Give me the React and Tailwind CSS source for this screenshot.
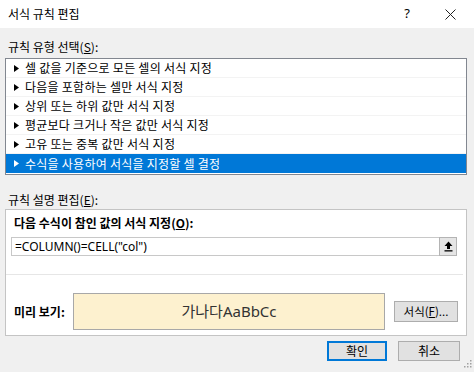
const rules = [
  "셀 값을 기준으로 모든 셀의 서식 지정",
  "다음을 포함하는 셀만 서식 지정",
  "상위 또는 하위 값만 서식 지정",
  "평균보다 크거나 작은 값만 서식 지정",
  "고유 또는 중복 값만 서식 지정",
  "수식을 사용하여 서식을 지정할 셀 결정",
];

const kr = { fontFamily: '"Noto Sans CJK KR", "Noto Sans", sans-serif' };
const latin = { fontFamily: '"Noto Sans", "Noto Sans CJK KR", sans-serif' };

function Tri({ color }) {
  return (
    <svg width="5" height="7" viewBox="0 0 5 7" className="shrink-0">
      <path d="M0 0 L5 3.5 L0 7 Z" fill={color} />
    </svg>
  );
}

export default function App() {
  return (
    <div className="relative w-[474px] h-[372px] bg-[#f0f0f0] text-[#000] overflow-hidden" style={kr}>
      {/* title bar */}
      <div className="h-[28px] bg-white flex items-center pl-[8px] text-[12px]">
        <span>서식 규칙 편집</span>
        <span className="ml-auto mr-[35px] text-[13px]" style={latin}>?</span>
        <svg width="11" height="11" viewBox="0 0 11 11" className="mr-[18px]">
          <path d="M0.5 0.5 L10.5 10.5 M10.5 0.5 L0.5 10.5" stroke="#222" strokeWidth="1" />
        </svg>
      </div>

      <div className="pl-[5px] w-[467px]">
        <div className="pt-[11px] pb-[3px] pl-[3px] leading-[16px] text-[12px]">
          규칙 유형 선택(<span className="underline">S</span>):
        </div>

        <div className="h-[117px] bg-white border border-[#828790] flex flex-col">
          {rules.map((r, i) => {
            const sel = i === rules.length - 1;
            return (
              <div
                key={r}
                className={
                  sel
                    ? "h-[19px] flex items-center gap-[6px] pl-[8px] bg-[#0078d7] text-white text-[12px] tracking-[0.25px]"
                    : "h-[19px] flex items-center gap-[6px] pl-[8px] border-b border-[#f3f3f3] text-[12px] tracking-[0.25px]"
                }
              >
                <Tri color={sel ? "#ffffff" : "#000000"} />
                <span className="leading-none">{r}</span>
              </div>
            );
          })}
        </div>

        <div className="pt-[17px] pb-[1px] pl-[3px] leading-[16px] text-[12px]">
          규칙 설명 편집(<span className="underline">E</span>):
        </div>

        <div className="h-[127px] bg-white border border-[#c4c4c4] flex flex-col">
          <div className="pt-[5px] pl-[8px] leading-[16px] text-[12px] font-bold">
            다음 수식이 참인 값의 서식 지정(<span className="underline">O</span>):
          </div>
          <div className="mt-[6px] ml-[5px] w-[446px] h-[19px] border border-[#c8c8c8] flex items-center">
            <span className="pl-[3px] text-[12px] leading-none" style={latin}>
              =COLUMN()=CELL("col")
            </span>
            <div className="ml-auto h-[19px] w-[18px] -mr-px -my-px bg-[#e5e5e5] border border-[#b4b4b4] flex items-center justify-center">
              <svg width="9" height="11" viewBox="0 0 9 11">
                <path d="M4.5 0.5 L8.5 5 L6 5 L6 8 L3 8 L3 5 L0.5 5 Z" fill="#000" />
                <rect x="0.5" y="9.2" width="8" height="1.3" fill="#000" />
              </svg>
            </div>
          </div>
          <div className="mt-[18px] mr-[3px] h-px bg-[#e6e6e6]" />
          <div className="mt-[18px] h-[37px] flex items-center">
            <span className="pl-[8px] w-[67px] text-[12px] font-bold">미리 보기:</span>
            <div className="w-[312px] h-[37px] bg-[#fdf1cf] border border-[#a8a8a8] flex items-center justify-center text-[15px] text-[#333]">
              가나다<span style={latin}>AaBbCc</span>
            </div>
            <div className="ml-[9px] w-[64px] h-[21px] bg-[#e1e1e1] border border-[#adadad] flex items-center justify-center text-[11.5px]">
              서식(<span className="underline">F</span>)...
            </div>
          </div>
        </div>

        <div className="mt-[5px] flex justify-end gap-[11px] mr-[7px]">
          <div className="w-[60px] h-[20px] bg-[#e1e1e1] border-2 border-[#0078d7] flex items-center justify-center text-[12px]">
            확인
          </div>
          <div className="w-[62px] h-[20px] bg-[#e1e1e1] border border-[#adadad] flex items-center justify-center text-[12px]">
            취소
          </div>
        </div>
      </div>

      {/* resize grip */}
      <svg width="10" height="10" viewBox="0 0 10 10" className="absolute right-[2px] bottom-[2px]">
        <g fill="#a0a0a0">
          <rect x="8" y="0" width="1.5" height="1.5" />
          <rect x="5" y="3" width="1.5" height="1.5" />
          <rect x="8" y="3" width="1.5" height="1.5" />
          <rect x="2" y="6" width="1.5" height="1.5" />
          <rect x="5" y="6" width="1.5" height="1.5" />
          <rect x="8" y="6" width="1.5" height="1.5" />
        </g>
      </svg>
    </div>
  );
}
